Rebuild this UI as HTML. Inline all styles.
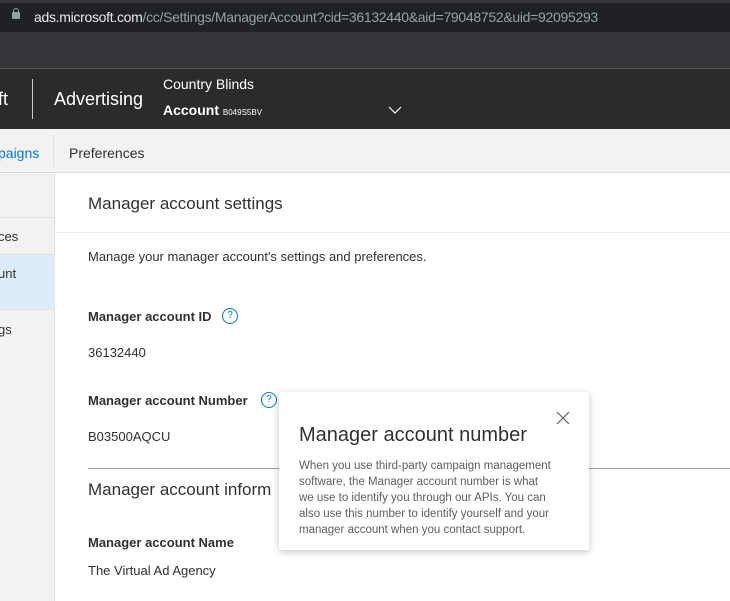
<!DOCTYPE html>
<html><head><style>
*{margin:0;padding:0;box-sizing:border-box}
body{width:730px;height:601px;overflow:hidden;font-family:"Liberation Sans",sans-serif;background:#fff;position:relative;color:#323130}
.a{position:absolute;white-space:nowrap}
</style></head><body>
<div class="a" style="left:0;top:0;width:730px;height:68px;background:#35363a"></div>
<div class="a" style="left:-20px;top:3px;width:770px;height:29px;background:#202124;border-radius:15px"></div>
<div class="a" style="left:12px;top:12px;width:8px;height:7px;background:#9aa0a6;border-radius:1px"></div>
<div class="a" style="left:13px;top:8px;width:6px;height:6px;border:1.5px solid #9aa0a6;border-bottom:none;border-radius:3px 3px 0 0"></div>
<div class="a" style="left:34px;top:9px;font-size:14px;color:#e8eaed;letter-spacing:-0.3px">ads.microsoft.com<span style="color:#9aa0a6">/cc/Settings/ManagerAccount?cid=36132440&amp;aid=79048752&amp;uid=92095293</span></div>
<div class="a" style="left:0;top:68px;width:730px;height:1px;background:#555"></div>
<div class="a" style="left:0;top:69px;width:730px;height:60px;background:#2b2b2b"></div>
<div class="a" style="left:-2px;top:89px;font-size:18px;color:#fff">ft</div>
<div class="a" style="left:32px;top:79px;width:1px;height:40px;background:#ccc"></div>
<div class="a" style="left:54px;top:89px;font-size:18px;color:#fff">Advertising</div>
<div class="a" style="left:163px;top:76px;font-size:14px;color:#fff">Country Blinds</div>
<div class="a" style="left:163px;top:102px;font-size:14px;color:#fff;font-weight:bold">Account <span style="font-size:8px;font-weight:normal">B049S5BV</span></div>
<svg class="a" style="left:388px;top:106px" width="14" height="9"><path d="M1 1l6 6 6-6" stroke="#fff" fill="none" stroke-width="1.2"/></svg>
<div class="a" style="left:0;top:129px;width:730px;height:44px;background:#f3f2f1;border-bottom:1px solid #e1dfdd"></div>
<div class="a" style="left:-2px;top:145px;font-size:14px;color:#0078d4">paigns</div>
<div class="a" style="left:53px;top:135px;width:1px;height:32px;background:#e1dfdd"></div>
<div class="a" style="left:69px;top:145px;font-size:14px;color:#323130">Preferences</div>
<div class="a" style="left:0;top:174px;width:55px;height:427px;background:#f3f2f1;border-right:1px solid #e1dfdd"></div>
<div class="a" style="left:0;top:217px;width:55px;height:1px;background:#e1dfdd"></div>
<div class="a" style="left:-2px;top:229px;font-size:13px">ces</div>
<div class="a" style="left:0;top:254px;width:55px;height:56px;background:#deecf9;border-top:1px solid #e1dfdd;border-bottom:1px solid #e1dfdd"></div>
<div class="a" style="left:-2px;top:266px;font-size:13px">unt</div>
<div class="a" style="left:-2px;top:322px;font-size:13px">gs</div>
<div class="a" style="left:88px;top:194px;font-size:17px">Manager account settings</div>
<div class="a" style="left:56px;top:232px;width:674px;height:1px;background:#edebe9"></div>
<div class="a" style="left:88px;top:249px;font-size:13px">Manage your manager account's settings and preferences.</div>
<div class="a" style="left:88px;top:309px;font-size:13px;font-weight:bold">Manager account ID</div>
<div class="a" style="left:222px;top:308px;width:16px;height:16px;border:1px solid #0078d4;border-radius:50%;font-size:10px;color:#0078d4;text-align:center;line-height:14px">?</div>
<div class="a" style="left:88px;top:345px;font-size:13px">36132440</div>
<div class="a" style="left:88px;top:393px;font-size:13px;font-weight:bold">Manager account Number</div>
<div class="a" style="left:261px;top:392px;width:16px;height:16px;border:1px solid #0078d4;border-radius:50%;font-size:10px;color:#0078d4;text-align:center;line-height:14px">?</div>
<div class="a" style="left:88px;top:429px;font-size:13px">B03500AQCU</div>
<div class="a" style="left:88px;top:468px;width:642px;height:1px;background:#a19f9d"></div>
<div class="a" style="left:88px;top:480px;font-size:17px">Manager account inform</div>
<div class="a" style="left:88px;top:535px;font-size:13px;font-weight:bold">Manager account Name</div>
<div class="a" style="left:88px;top:563px;font-size:13px">The Virtual Ad Agency</div>
<div class="a" style="left:279px;top:392px;width:310px;height:158px;background:#fff;box-shadow:0 2px 8px rgba(0,0,0,.22);border-radius:2px"></div>
<svg class="a" style="left:556px;top:411px" width="14" height="14"><path d="M1 1l12 12M13 1L1 13" stroke="#605e5c" stroke-width="1.2"/></svg>
<div class="a" style="left:299px;top:424px;font-size:20px;color:#323130">Manager account number</div>
<div class="a" style="left:299px;top:458px;font-size:11.5px;line-height:16px;color:#605e5c">When you use third-party campaign management<br>software, the Manager account number is what<br>we use to identify you through our APIs. You can<br>also use this number to identify yourself and your<br>manager account when you contact support.</div>
</body></html>
